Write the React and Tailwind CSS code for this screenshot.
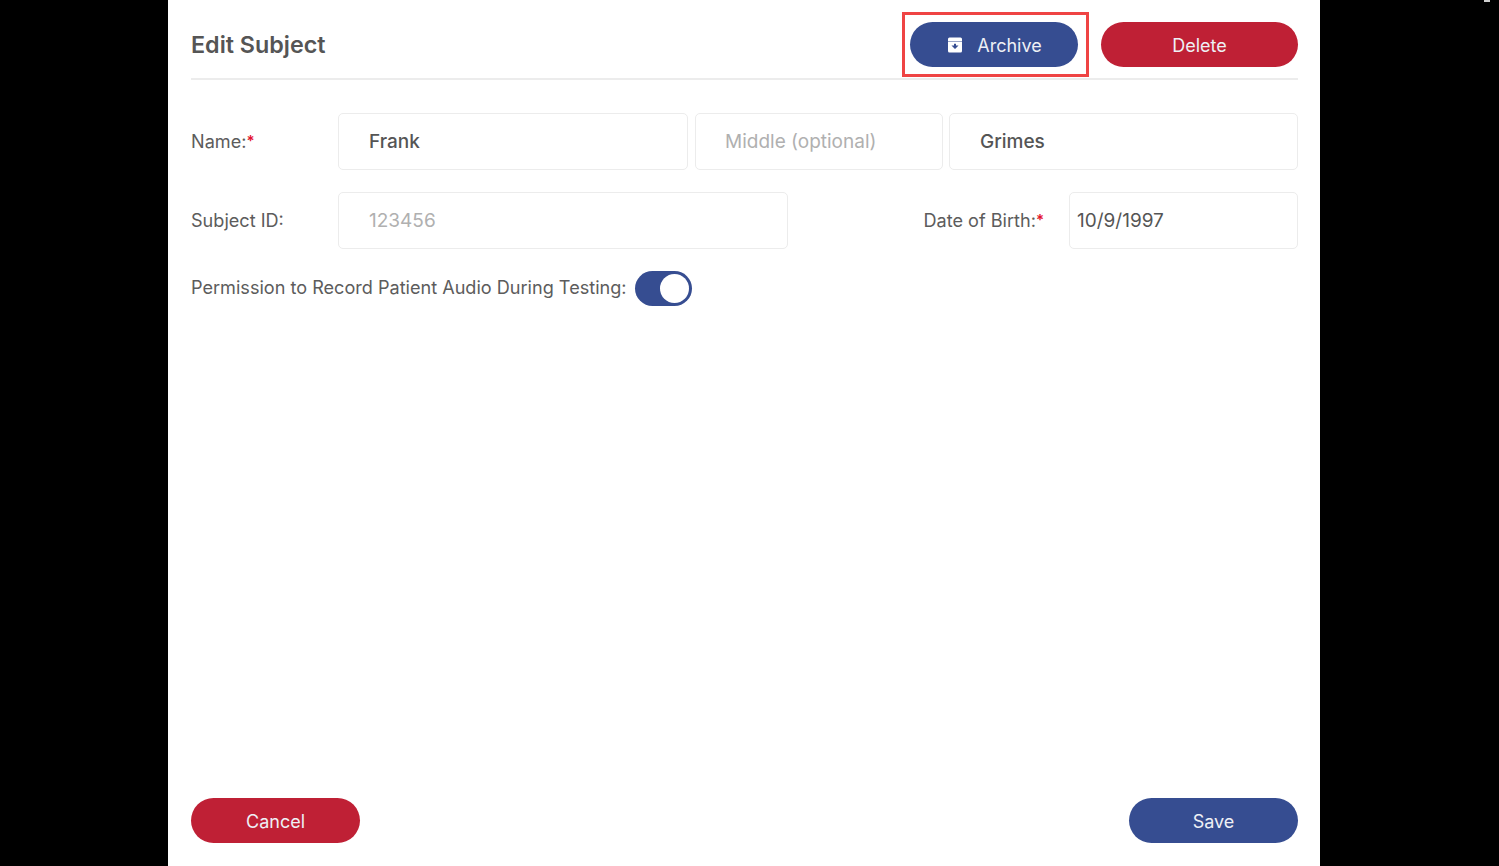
import React, { useState } from 'react';

const inputClass =
  'h-[57px] rounded-[5px] border border-[#ececec] bg-white text-[19px] text-[#555] outline-none placeholder:text-[#b0b0b0]';

const Label = ({ children, required }) => (
  <label className="text-[18.100px] text-[#5c5c5c] whitespace-nowrap">
    {children}
    {required && <span className="text-[15px] font-semibold text-[#e3122d] align-[2px]">*</span>}
  </label>
);

const PillButton = ({ color, className, children }) => (
  <button
    className={`h-[45px] rounded-full flex items-center justify-center pt-px text-[18px] text-[#eef0f5] ${color} ${className}`}
  >
    {children}
  </button>
);

const ArchiveIcon = () => (
  <svg viewBox="0 0 16 16" className="-mt-px mr-[14px] ml-px h-4 w-4">
    <path
      fill="#fff"
      fillRule="evenodd"
      d="M2.500 0.500h11A1.500 1.500 0 0 1 15 2v2H1V2A1.500 1.500 0 0 1 2.500 0.500zM1 4.600h14V14a1.500 1.500 0 0 1-1.500 1.500h-11A1.500 1.500 0 0 1 1 14V4.600zM7 6.800v1.700H4.500L8 12l3.500-3.500H9V6.800H7z"
    />
  </svg>
);

export default function App() {
  const [record, setRecord] = useState(true);

  return (
    <div className="relative h-screen overflow-hidden bg-black pl-[168px] font-['Inter','Liberation_Sans',sans-serif]">
      {/* little cursor remnant in the corner */}
      <div className="absolute top-0 left-[1484px] w-[6px] h-[2px] bg-[#cfcfcf]" />

      <div className="flex h-full w-[1152px] flex-col bg-white pl-[23px] pr-[22px] pb-[23px]">
        <div className="flex h-[80px] items-start justify-between border-b-2 border-[#ececec] pt-3">
          <div className="flex h-[65px] items-center pt-[2px] text-[23.300px] font-semibold text-[#555]">
            Edit Subject
          </div>
          <div className="flex h-[65px] items-center">
            <div className="flex h-[65px] w-[187px] items-center border-[3px] border-[#ef4444] pl-[5px]">
              <PillButton color="bg-[#364d91]" className="w-[168px]">
                <ArchiveIcon />
                Archive
              </PillButton>
            </div>
            <PillButton color="bg-[#bf2035]" className="ml-3 w-[197px]">
              Delete
            </PillButton>
          </div>
        </div>

        <div className="mt-[33px] flex items-center">
          <div className="w-[147px]">
            <Label required>Name:</Label>
          </div>
          <input className={`${inputClass} w-[350px] pl-[30px] font-medium`} defaultValue="Frank" />
          <input className={`${inputClass} ml-[7px] w-[248px] pl-[29px]`} placeholder="Middle (optional)" />
          <input className={`${inputClass} ml-[6px] w-[349px] pl-[30px] font-medium`} defaultValue="Grimes" />
        </div>

        <div className="mt-[22px] flex items-center">
          <div className="w-[147px]">
            <Label>Subject ID:</Label>
          </div>
          <input className={`${inputClass} w-[450px] pl-[30px]`} placeholder="123456" />
          <div className="flex flex-1 justify-end pr-[25px]">
            <Label required>Date of Birth:</Label>
          </div>
          <input className={`${inputClass} w-[229px] pl-[7px] text-[18.600px]`} defaultValue="10/9/1997" />
        </div>

        <div className="mt-[22px] flex items-center">
          <div className="-mt-[2px]">
            <Label>Permission to Record Patient Audio During Testing:</Label>
          </div>
          <button
            onClick={() => setRecord(!record)}
            className={`ml-2 flex h-[35px] w-[57px] items-center rounded-full px-[3px] ${
              record ? 'justify-end bg-[#364d91]' : 'justify-start bg-[#ccc]'
            }`}
          >
            <span className="h-[29px] w-[29px] rounded-full bg-white" />
          </button>
        </div>

        <div className="mt-auto flex justify-between">
          <PillButton color="bg-[#bf2035]" className="w-[169px]">
            Cancel
          </PillButton>
          <PillButton color="bg-[#364d91]" className="w-[169px]">
            Save
          </PillButton>
        </div>
      </div>
    </div>
  );
}
